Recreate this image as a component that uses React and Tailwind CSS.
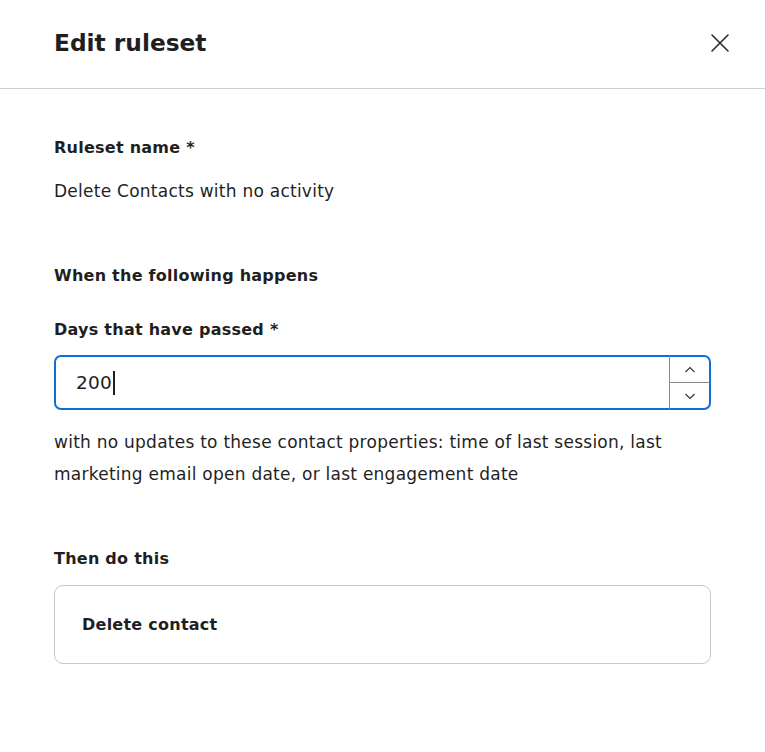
export default function App() {
  return (
    <div className="w-[766px] h-[752px] bg-white border-r border-[#d0d0d0] text-[#1f1f1f] font-['DejaVu_Sans',sans-serif] flex flex-col">
      <div className="h-[89px] border-b border-[#cfcfcf] flex items-center justify-between pl-[54px] pr-[34px] shrink-0">
        <h1 className="text-[23.3px] font-bold pb-[2px]">Edit ruleset</h1>
        <button className="w-[22px] h-[22px] flex items-center justify-center mb-[2px]">
          <svg width="20" height="20" viewBox="0 0 20 20" fill="none" stroke="#2a2a2a" strokeWidth="1.6" strokeLinecap="round">
            <path d="M2 2 L18 18 M18 2 L2 18" />
          </svg>
        </button>
      </div>
      <div className="pl-[54px] pr-[54px] pt-[47px] flex flex-col tracking-[0.25px]">
        <div className="text-[16px] font-bold leading-[24px]">Ruleset name *</div>
        <div className="text-[17px] leading-[24px] mt-[19px]">Delete Contacts with no activity</div>

        <div className="text-[16px] font-bold leading-[24px] mt-[61px]">When the following happens</div>
        <div className="text-[16px] font-bold leading-[24px] mt-[30px]">Days that have passed *</div>
        <div className="mt-[13px] h-[55px] border-2 border-[#0b6fe0] rounded-[7px] flex items-stretch">
          <div className="flex-1 flex items-center pl-[20px] text-[18.5px]">
            <span>200</span>
            <span className="w-[1.5px] h-[24px] bg-[#1f1f1f] ml-[1px]"></span>
          </div>
          <div className="w-[41px] flex flex-col border-l border-[#8a8a8a] my-[-1px] mr-[-1px] py-[1px]">
            <div className="flex-1 flex items-center justify-center border-b border-[#8a8a8a]">
              <svg width="12" height="8" viewBox="0 0 12 8" fill="none" stroke="#333" strokeWidth="1.1">
                <path d="M1.5 6 L6 1.5 L10.5 6" />
              </svg>
            </div>
            <div className="flex-1 flex items-center justify-center">
              <svg width="12" height="8" viewBox="0 0 12 8" fill="none" stroke="#333" strokeWidth="1.1">
                <path d="M1.5 2 L6 6.5 L10.5 2" />
              </svg>
            </div>
          </div>
        </div>
        <p className="text-[17px] leading-[32px] mt-[16px]">
          with no updates to these contact properties: time of last session, last marketing email open date, or last engagement date
        </p>

        <div className="text-[16px] font-bold leading-[24px] mt-[57px]">Then do this</div>
        <div className="mt-[14px] h-[79px] border border-[#c9c9c9] rounded-[9px] flex items-center pl-[27px]">
          <span className="text-[16px] font-bold">Delete contact</span>
        </div>
      </div>
    </div>
  );
}
